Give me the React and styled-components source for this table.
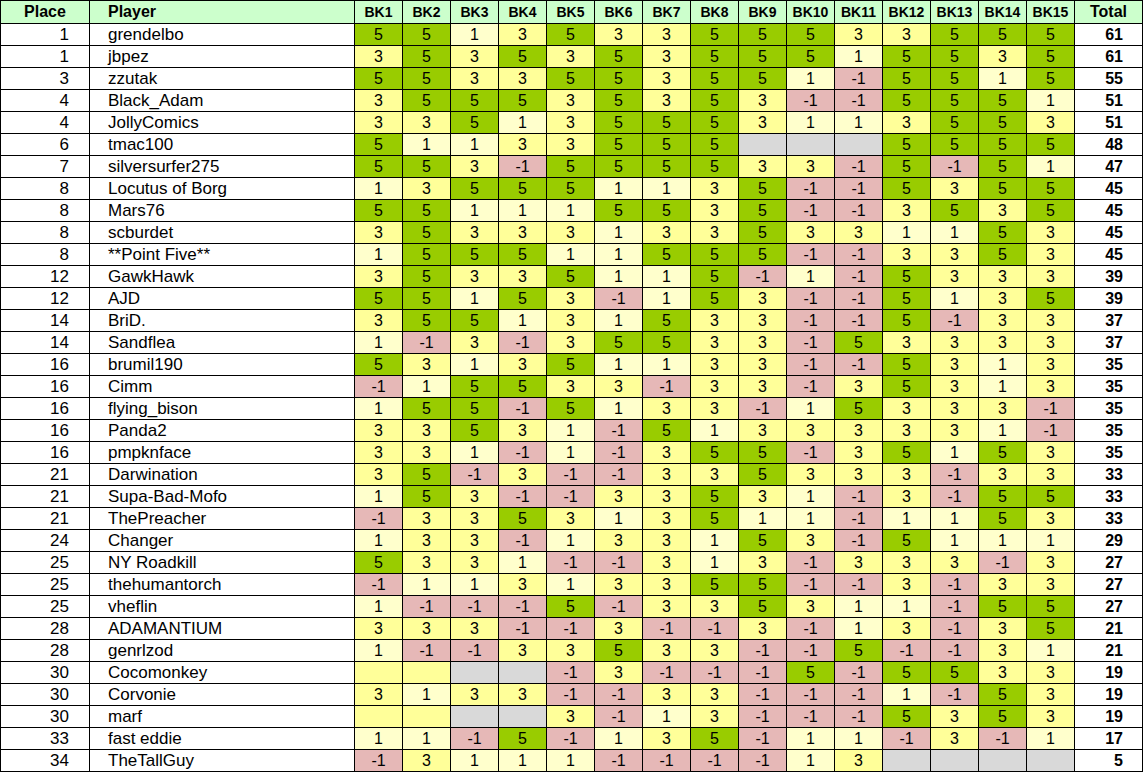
import React from "react";
import styled, { createGlobalStyle } from "styled-components";

const GlobalStyle = createGlobalStyle`
  html, body {
    margin: 0;
    padding: 0;
    background: #ffffff;
  }
  body {
    font-family: "Liberation Sans", Arial, sans-serif;
    color: #000000;
  }
`;

// x = grey (no pick), e = empty yellow cell
const rows = [
  [1, "grendelbo", "5 5 1 3 5 3 3 5 5 5 3 3 5 5 5", 61],
  [1, "jbpez", "3 5 3 5 3 5 3 5 5 5 1 5 5 3 5", 61],
  [3, "zzutak", "5 5 3 3 5 5 3 5 5 1 -1 5 5 1 5", 55],
  [4, "Black_Adam", "3 5 5 5 3 5 3 5 3 -1 -1 5 5 5 1", 51],
  [4, "JollyComics", "3 3 5 1 3 5 5 5 3 1 1 3 5 5 3", 51],
  [6, "tmac100", "5 1 1 3 3 5 5 5 x x x 5 5 5 5", 48],
  [7, "silversurfer275", "5 5 3 -1 5 5 5 5 3 3 -1 5 -1 5 1", 47],
  [8, "Locutus of Borg", "1 3 5 5 5 1 1 3 5 -1 -1 5 3 5 5", 45],
  [8, "Mars76", "5 5 1 1 1 5 5 3 5 -1 -1 3 5 3 5", 45],
  [8, "scburdet", "3 5 3 3 3 1 3 3 5 3 3 1 1 5 3", 45],
  [8, "**Point Five**", "1 5 5 5 1 1 5 5 5 -1 -1 3 3 5 3", 45],
  [12, "GawkHawk", "3 5 3 3 5 1 1 5 -1 1 -1 5 3 3 3", 39],
  [12, "AJD", "5 5 1 5 3 -1 1 5 3 -1 -1 5 1 3 5", 39],
  [14, "BriD.", "3 5 5 1 3 1 5 3 3 -1 -1 5 -1 3 3", 37],
  [14, "Sandflea", "1 -1 3 -1 3 5 5 3 3 -1 5 3 3 3 3", 37],
  [16, "brumil190", "5 3 1 3 5 1 1 3 3 -1 -1 5 3 1 3", 35],
  [16, "Cimm", "-1 1 5 5 3 3 -1 3 3 -1 3 5 3 1 3", 35],
  [16, "flying_bison", "1 5 5 -1 5 1 3 3 -1 1 5 3 3 3 -1", 35],
  [16, "Panda2", "3 3 5 3 1 -1 5 1 3 3 3 3 3 1 -1", 35],
  [16, "pmpknface", "3 3 1 -1 1 -1 3 5 5 -1 3 5 1 5 3", 35],
  [21, "Darwination", "3 5 -1 3 -1 -1 3 3 5 3 3 3 -1 3 3", 33],
  [21, "Supa-Bad-Mofo", "1 5 3 -1 -1 3 3 5 3 1 -1 3 -1 5 5", 33],
  [21, "ThePreacher", "-1 3 3 5 3 1 3 5 1 1 -1 1 1 5 3", 33],
  [24, "Changer", "1 3 3 -1 1 3 3 1 5 3 -1 5 1 1 1", 29],
  [25, "NY Roadkill", "5 3 3 1 -1 -1 3 1 3 -1 3 3 3 -1 3", 27],
  [25, "thehumantorch", "-1 1 1 3 1 3 3 5 5 -1 -1 3 -1 3 3", 27],
  [25, "vheflin", "1 -1 -1 -1 5 -1 3 3 5 3 1 1 -1 5 5", 27],
  [28, "ADAMANTIUM", "3 3 3 -1 -1 3 -1 -1 3 -1 1 3 -1 3 5", 21],
  [28, "genrlzod", "1 -1 -1 3 3 5 3 3 -1 -1 5 -1 -1 3 1", 21],
  [30, "Cocomonkey", "e e x x -1 3 -1 -1 -1 5 -1 5 5 3 3", 19],
  [30, "Corvonie", "3 1 3 3 -1 -1 3 3 -1 -1 -1 1 -1 5 3", 19],
  [30, "marf", "e e x x 3 -1 1 3 -1 -1 -1 5 3 5 3", 19],
  [33, "fast eddie", "1 1 -1 5 -1 1 3 5 -1 1 1 -1 3 -1 1", 17],
  [34, "TheTallGuy", "-1 3 1 1 1 -1 -1 -1 -1 1 3 x x x x", 5],
];

const tones = {
  "5": "#99cc00",
  "3": "#ffff99",
  "1": "#ffffcc",
  "-1": "#e6b8b7",
  e: "#ffff99",
  x: "#d9d9d9",
};

const books = Array.from({ length: 15 }, (_, i) => `BK${i + 1}`);

const App = () => {
  return (
    <>
      <GlobalStyle />
      <Sheet>
        <HeadCell>Place</HeadCell>
        <HeadCell $align="left">Player</HeadCell>
        {books.map((b) => (
          <BookHead key={b}>{b}</BookHead>
        ))}
        <HeadCell>Total</HeadCell>

        {rows.map(([place, name, scores, total]) => (
          <React.Fragment key={name}>
            <PlaceCell>{place}</PlaceCell>
            <NameCell>{name}</NameCell>
            {scores.split(" ").map((s, i) => (
              <ScoreCell key={i} $tone={tones[s]}>
                {s === "x" || s === "e" ? "" : s}
              </ScoreCell>
            ))}
            <TotalCell>{total}</TotalCell>
          </React.Fragment>
        ))}
      </Sheet>
    </>
  );
};

export default App;

const Sheet = styled.div`
  display: grid;
  grid-template-columns: 88px 264px repeat(15, 47px) 67px;
  grid-template-rows: 22px;
  grid-auto-rows: 21px;
  gap: 1px;
  padding: 1px;
  width: max-content;
  background: #000000;
`;

const Cell = styled.div`
  display: flex;
  align-items: center;
  background: #ffffff;
  white-space: nowrap;
  overflow: hidden;
`;

const HeadCell = styled(Cell)`
  background: #ccffcc;
  font-weight: bold;
  font-size: 16px;
  justify-content: ${(p) => (p.$align === "left" ? "flex-start" : "center")};
  padding-left: ${(p) => (p.$align === "left" ? "18px" : "0")};
`;

const BookHead = styled(Cell)`
  background: #ccffcc;
  font-weight: bold;
  font-size: 14px;
  justify-content: center;
`;

const PlaceCell = styled(Cell)`
  justify-content: flex-end;
  padding-right: 20px;
  font-size: 17px;
`;

const NameCell = styled(Cell)`
  padding-left: 18px;
  font-size: 17px;
`;

const ScoreCell = styled(Cell)`
  justify-content: center;
  font-size: 16px;
  background: ${(p) => p.$tone || "#ffffff"};
`;

const TotalCell = styled(Cell)`
  justify-content: flex-end;
  padding-right: 19px;
  font-size: 16px;
  font-weight: bold;
`;
